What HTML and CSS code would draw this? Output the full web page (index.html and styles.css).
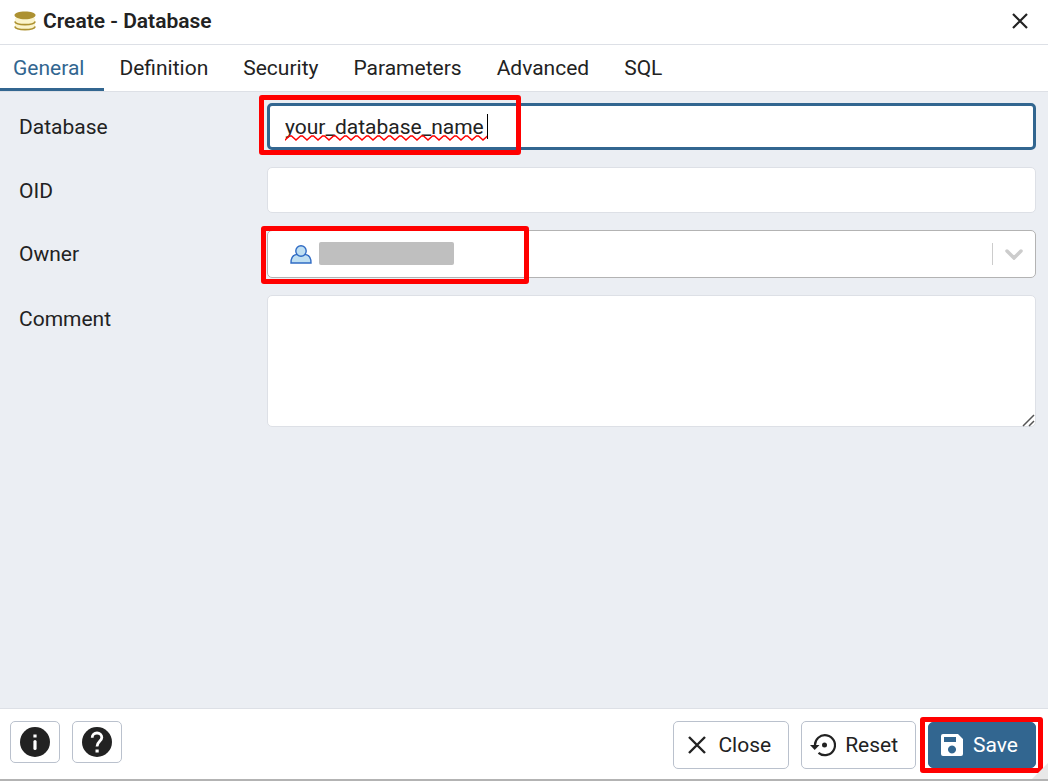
FILE: index.html
```html
<!DOCTYPE html>
<html lang="en">
<head>
    <meta charset="UTF-8">
    <meta name="viewport" content="width=device-width, initial-scale=1.0">
    <title>Create - Database</title>
    <link rel="stylesheet" href="styles.css">
</head>
<body>
    <div class="dialog">
        <header class="dialog-header">
            <svg class="db-icon" viewBox="0 0 22 20" width="22" height="20">
                <path d="M1 12.500v3C1 17.400 5.500 19 11 19s10-1.600 10-3.500v-3z" fill="#fbf4cc"/>
                <path d="M1 7v4c0 1.900 4.500 3.500 10 3.500s10-1.600 10-3.500V7z" fill="#fbf4cc"/>
                <path d="M.8 15.500C1.500 17.500 5.500 18.700 11 18.700s9.500-1.200 10.200-3.200M.8 10.500c.7 2 4.700 3.200 10.200 3.200s9.500-1.200 10.200-3.200" fill="none" stroke="#ad9131" stroke-width="1.700"/>
                <path d="M.5 4.200C.5 2.200 5 .6 11 .6s10.500 1.600 10.500 3.600S17 8.200 11 8.200.5 6.400.5 4.200z" fill="#ad9131"/>
            </svg>
            <h1>Create - Database</h1>
            <button class="icon-close" aria-label="Close dialog">
                <svg viewBox="0 0 16 16" width="16" height="16"><path d="M1 1l14 14M15 1L1 15" stroke="#222" stroke-width="2.200" fill="none"/></svg>
            </button>
        </header>

        <nav class="tabs">
            <button class="tab active">General</button>
            <button class="tab">Definition</button>
            <button class="tab">Security</button>
            <button class="tab">Parameters</button>
            <button class="tab">Advanced</button>
            <button class="tab">SQL</button>
        </nav>

        <main class="form">
            <div class="row">
                <label for="database">Database</label>
                <div class="field">
                    <input type="text" id="database" class="focused" value="your_database_name" spellcheck="false">
                    <svg class="squiggle" width="202" height="6">
                        <defs>
                            <pattern id="wave" width="11" height="6" patternUnits="userSpaceOnUse">
                                <path d="M-1 4L0 5L4.500 1h2L11 5l1-1" fill="none" stroke="#f00" stroke-width="1.400"/>
                            </pattern>
                        </defs>
                        <rect width="202" height="6" fill="url(#wave)"/>
                    </svg>
                    <span class="caret"></span>
                    <span class="highlight highlight-database"></span>
                </div>
            </div>
            <div class="row">
                <label for="oid">OID</label>
                <div class="field">
                    <input type="text" id="oid">
                </div>
            </div>
            <div class="row">
                <label for="owner">Owner</label>
                <div class="field">
                    <select id="owner"><option></option></select>
                    <div class="owner-value">
                        <svg viewBox="0 0 22 20" width="22" height="20">
                            <path d="M1 19c0-5.500 2.500-8.300 6-8.600h8c3.500.3 6 3.100 6 8.600z" fill="#bfdff2" stroke="#2f6bc4" stroke-width="1.400"/>
                            <circle cx="11" cy="7" r="5.200" fill="#bfdff2" stroke="#2f6bc4" stroke-width="1.400"/>
                        </svg>
                        <span class="redacted"></span>
                    </div>
                    <div class="select-arrow">
                        <svg viewBox="0 0 18 12" width="18" height="12"><path d="M2 3l7 7 7-7" fill="none" stroke="#ccc" stroke-width="3.500" stroke-linecap="round"/></svg>
                    </div>
                    <span class="highlight highlight-owner"></span>
                </div>
            </div>
            <div class="row">
                <label for="comment">Comment</label>
                <div class="field">
                    <textarea id="comment"></textarea>
                    <svg class="grip" viewBox="0 0 14 14" width="14" height="14"><path d="M1 13L12 2M7 13l5-5" stroke="#555" stroke-width="1.500"/></svg>
                </div>
            </div>
        </main>

        <footer class="dialog-footer">
            <button class="btn btn-icon" aria-label="Info">
                <svg viewBox="0 0 30 30" width="30" height="30">
                    <circle cx="15" cy="15" r="15" fill="#222"/>
                    <path d="M15 14.500v7" stroke="#fff" stroke-width="3.200" stroke-linecap="round"/>
                    <rect x="13.400" y="7.500" width="3.200" height="3" fill="#fff"/>
                </svg>
            </button>
            <button class="btn btn-icon" aria-label="Help">
                <svg viewBox="0 0 30 30" width="30" height="30">
                    <circle cx="15" cy="15" r="15" fill="#222"/>
                    <path d="M10.200 10.700C10.200 7.800 12.300 6 15 6s4.800 1.800 4.800 4.500c0 3.700-4.800 4-4.800 9" fill="none" stroke="#fff" stroke-width="2.800"/>
                    <rect x="13.500" y="22.500" width="3.200" height="3" fill="#fff"/>
                </svg>
            </button>
            <div class="actions">
                <button class="btn">
                    <svg viewBox="0 0 24 24" width="24" height="24"><path d="M4 4l16 16M20 4L4 20" stroke="#222" stroke-width="2.400"/></svg>
                    Close
                </button>
                <button class="btn btn-reset">
                    <svg viewBox="0 0 26 24" width="26" height="24">
                        <path d="M5 13A10 10 0 1 1 8.500 19.800" fill="none" stroke="#222" stroke-width="2.200"/>
                        <path d="M0 12h9.500L4.700 17z" fill="#222"/>
                        <circle cx="14.500" cy="12" r="2.500" fill="#222"/>
                    </svg>
                    Reset
                </button>
                <div class="save-wrap">
                    <button class="btn btn-primary">
                        <svg viewBox="0 0 24 24" width="24" height="24"><path fill-rule="evenodd" d="M3 1h15l5 5v15a2 2 0 0 1-2 2H3a2 2 0 0 1-2-2V3a2 2 0 0 1 2-2zM4 4v5h12V4zM12 12.500a4 4 0 1 0 .01 0z" fill="#fff"/></svg>
                        Save
                    </button>
                    <span class="highlight highlight-save"></span>
                </div>
            </div>
            <span class="corner"></span>
        </footer>
    </div>
</body>
</html>
```
FILE: styles.css
```css
* {
    box-sizing: border-box;
}
body {
    margin: 0;
    font-family: Roboto, sans-serif;
    font-size: 21px;
    line-height: 24px;
    color: #222;
}
button, input, select, textarea {
    font: inherit;
    color: inherit;
}
svg {
    display: block;
    flex: none;
}
.dialog {
    display: flex;
    flex-direction: column;
    min-height: 100vh;
    background: #fff;
    border-bottom: 2px solid #b3b3b3;
}
.dialog-header {
    display: flex;
    align-items: center;
    height: 45px;
    padding: 0 16px 2px 14px;
    border-bottom: 1px solid #dde0e6;
}
.dialog-header h1 {
    flex: 1;
    margin: 0 0 0 7px;
    font-size: 21px;
    line-height: 24px;
    font-weight: 600;
}
.icon-close {
    padding: 4px;
    border: 0;
    background: none;
}
.tabs {
    display: flex;
    height: 47px;
    border-bottom: 1px solid #dde0e6;
}
.tab {
    padding: 2px 20px 0 15px;
    border: 0;
    border-bottom: 3px solid transparent;
    background: none;
}
.tab:first-child {
    padding-left: 13px;
}
.tab.active {
    color: #326690;
    border-bottom-color: #326690;
}
.form {
    flex: 1;
    display: flex;
    flex-direction: column;
    gap: 17px;
    padding: 11px 12px 17px 19px;
    background: #ebeef3;
}
.row {
    display: grid;
    grid-template-columns: 248px 1fr;
}
.row label {
    padding-top: 12px;
}
.field {
    position: relative;
}
.field input, .field select, .field textarea {
    display: block;
    width: 100%;
    height: 46px;
    padding: 0 17px;
    border: 1px solid #dde0e6;
    border-radius: 5px;
    background: #fff;
    outline: none;
}
.field .focused {
    height: 47px;
    padding: 0 15px;
    border: 3px solid #326690;
}
.field select {
    height: 48px;
    border-color: #b3b3b3;
    appearance: none;
}
.field textarea {
    height: 132px;
    resize: none;
}
.squiggle {
    position: absolute;
    left: 18px;
    top: 32px;
}
.caret {
    position: absolute;
    left: 220px;
    top: 11px;
    width: 1px;
    height: 25px;
    background: #000;
}
.owner-value {
    position: absolute;
    left: 23px;
    top: 12px;
    display: flex;
    align-items: center;
    gap: 7px;
    pointer-events: none;
}
.redacted {
    width: 135px;
    height: 23px;
    border-radius: 2px;
    background: #bfbfbf;
}
.select-arrow {
    position: absolute;
    right: 13px;
    top: 13px;
    display: flex;
    align-items: center;
    height: 22px;
    padding-left: 12px;
    border-left: 1px solid #ccc;
    pointer-events: none;
}
.grip {
    position: absolute;
    right: 0;
    bottom: 0;
}
.highlight {
    position: absolute;
    border: 5px solid #f00;
    border-radius: 3px;
    pointer-events: none;
}
.highlight-database {
    left: -8px;
    top: -8px;
    width: 262px;
    height: 60px;
}
.highlight-owner {
    left: -6px;
    top: -4px;
    width: 268px;
    height: 58px;
}
.highlight-save {
    inset: -5px -7px -5px -8px;
}
.dialog-footer {
    position: relative;
    display: flex;
    align-items: flex-start;
    gap: 12px;
    padding: 12px 12px 10px 10px;
    border-top: 1px solid #dde0e6;
}
.btn {
    display: flex;
    align-items: center;
    gap: 9px;
    height: 48px;
    padding: 0 17px 0 11px;
    border: 1px solid #bac1cd;
    border-radius: 5px;
    background: #fff;
}
.btn-icon {
    justify-content: center;
    width: 50px;
    height: 42px;
    padding: 0;
}
.btn-reset {
    padding-left: 8px;
}
.btn-primary {
    height: 46px;
    border-color: #326690;
    background: #326690;
    color: #fff;
}
.actions {
    display: flex;
    align-items: center;
    gap: 12px;
    margin-left: auto;
}
.save-wrap {
    position: relative;
}
.corner {
    position: absolute;
    right: 0;
    bottom: 0;
    border: 8px solid;
    border-color: transparent #e8e8e8 #e8e8e8 transparent;
}
```
